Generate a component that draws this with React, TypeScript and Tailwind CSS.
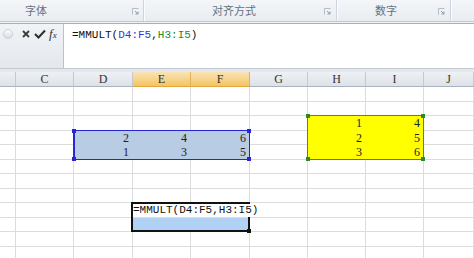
import React from 'react'

const HEADERS = ['', 'C', 'D', 'E', 'F', 'G', 'H', 'I', 'J']
const ROW_COUNT = 12

// values keyed by "col,row" (col = header index, row = 1-based sheet row)
const VALUES: Record<string, string> = {
  '2,4': '2', '3,4': '4', '4,4': '6',
  '2,5': '1', '3,5': '3', '4,5': '5',
  '6,3': '1', '7,3': '4',
  '6,4': '2', '7,4': '5',
  '6,5': '3', '7,5': '6',
}

function cellStyle(c: number, r: number) {
  if (c >= 2 && c <= 4 && r >= 4 && r <= 5) return 'bg-[#b8cce4] border-[#b8cce4]'
  if (c >= 6 && c <= 7 && r >= 3 && r <= 5) return 'bg-[#ffff00] border-[#ffff00]'
  if (c >= 3 && c <= 4 && r === 10) return 'bg-[#b0d0f4] border-[#b0d0f4]'
  return 'bg-white border-[#dadcdd]'
}

function Launcher() {
  return (
    <svg width="7" height="7" viewBox="0 0 7 7" className="mt-[1px] ml-auto">
      <path d="M0.5 6.5V0.5H6.5" fill="none" stroke="#b4bcc6" strokeWidth="1" />
      <path d="M3 3L6 6M6 3.5V6H3.5" fill="none" stroke="#8f99a6" strokeWidth="1" />
    </svg>
  )
}

const groupCls =
  'shrink-0 flex items-center border-r border-[#cdd4dd] shadow-[1px_0_0_#fbfcfd]'
const labelCls =
  "text-[11px] leading-none text-[#67717f] font-['Noto_Sans_CJK_SC',sans-serif]"

function Ribbon() {
  return (
    <div className="flex flex-col">
      <div className="h-[21px] flex bg-gradient-to-b from-[#f4f6f9] to-[#e8ecf1]">
        <div className={`w-[144px] pr-[4px] ${groupCls}`}>
          <span className={`ml-[25px] ${labelCls}`}>字体</span>
          <Launcher />
        </div>
        <div className={`w-[193px] pr-[5px] ${groupCls}`}>
          <span className={`ml-[68px] ${labelCls}`}>对齐方式</span>
          <Launcher />
        </div>
        <div className={`w-[114px] pr-[5px] ${groupCls}`}>
          <span className={`ml-[38px] ${labelCls}`}>数字</span>
          <Launcher />
        </div>
        <div className="flex-1" />
      </div>
      <div className="h-px bg-[#c3cad3]" />
      <div className="h-px bg-[#eef1f4]" />
      <div className="h-px bg-[#a7b0bb]" />
    </div>
  )
}

function FormulaBar() {
  return (
    <div className="h-[45px] flex border-b border-[#c3cad4]">
      <div className="w-[64px] shrink-0 flex items-start pl-[3px] pt-[5px] bg-gradient-to-b from-[#f1f3f6] to-[#e4e8ed] border-r border-[#b9c1cb]">
        <div className="w-[10px] h-[10px] rounded-full bg-gradient-to-b from-[#fbfcfd] to-[#d9dee5] border border-[#c9cfd7]" />
        <svg width="10" height="10" viewBox="0 0 10 10" className="ml-[8px]">
          <path d="M2 2L8 8M8 2L2 8" stroke="#3a3a3a" strokeWidth="1.8" />
        </svg>
        <svg width="12" height="10" viewBox="0 0 12 10" className="ml-[3px]">
          <path d="M1 5L4.5 8.5L11 1.5" fill="none" stroke="#2e2e2e" strokeWidth="2" />
        </svg>
        <span className="ml-[3px] -mt-[2px] text-[13px] leading-[14px] italic font-['Liberation_Serif',serif] text-[#333]">
          f<span className="text-[9px]">x</span>
        </span>
      </div>
      <div className="flex-1 bg-white pl-[8px] pt-[3px] text-[11px] leading-[16px] font-['Liberation_Mono',monospace] text-[#111] whitespace-nowrap">
        =MMULT(<span className="text-[#3838d8]">D4:F5</span>,<span className="text-[#2a8a2a]">H3:I5</span>)
      </div>
    </div>
  )
}

function Sheet() {
  const rows = Array.from({ length: ROW_COUNT }, (_, i) => i + 1)
  return (
    <div className="grid grid-cols-[16px_58px_59px_58px_59px_58px_58px_58px_1fr] grid-rows-[15px_15px_14px_15px_14px_15px_14px_15px_14px_15px_14px_15px_15px] font-['Liberation_Serif',serif] text-[12px] text-[#222]">
      {HEADERS.map((h, c) => {
        const active = c === 3 || c === 4
        return (
          <div
            key={`h${c}`}
            className={`flex items-center justify-center border-r border-b ${
              active
                ? 'bg-gradient-to-b from-[#fae3b4] to-[#f2c560] border-r-[#e2b25a] border-b-[#e7a43c]'
                : 'bg-gradient-to-b from-[#eef1f4] to-[#dde2e8] border-r-[#c3c9d1] border-b-[#a9b3bf]'
            }`}
          >
            <span className="leading-none text-[12px] text-[#333]">{h}</span>
          </div>
        )
      })}
      {rows.map((r) =>
        HEADERS.map((_, c) => (
          <div
            key={`${c}-${r}`}
            className={`flex items-center justify-end pr-[3px] border-r border-b leading-none ${
              c === 0 ? 'bg-white border-[#dadcdd]' : cellStyle(c, r)
            }`}
            style={{ gridColumn: c + 1, gridRow: r + 1 }}
          >
            {VALUES[`${c},${r}`]}
          </div>
        ))
      )}

      {/* D4:F5 selection */}
      <div className="col-start-3 col-end-6 row-start-5 row-end-7 -mt-px -ml-px relative border border-l-2 border-[#2626d6] pointer-events-none">
        <span className="absolute -left-[3px] -top-[2px] w-[4px] h-[4px] bg-[#2626d6]" />
        <span className="absolute -right-[2px] -top-[2px] w-[4px] h-[4px] bg-[#2626d6]" />
        <span className="absolute -left-[3px] -bottom-[2px] w-[4px] h-[4px] bg-[#2626d6]" />
        <span className="absolute -right-[2px] -bottom-[2px] w-[4px] h-[4px] bg-[#2626d6]" />
      </div>

      {/* H3:I5 selection */}
      <div className="col-start-7 col-end-9 row-start-4 row-end-7 -mt-px -ml-px relative border border-[#2f9a2f] pointer-events-none">
        <span className="absolute -left-[2px] -top-[2px] w-[4px] h-[4px] bg-[#2b8a2b]" />
        <span className="absolute -right-[2px] -top-[2px] w-[4px] h-[4px] bg-[#2b8a2b]" />
        <span className="absolute -left-[2px] -bottom-[2px] w-[4px] h-[4px] bg-[#2b8a2b]" />
        <span className="absolute -right-[2px] -bottom-[2px] w-[4px] h-[4px] bg-[#2b8a2b]" />
      </div>

      {/* E9:F10 array formula being edited */}
      <div className="col-start-4 col-end-6 row-start-10 row-end-12 -mt-px -ml-[2px] relative border-2 border-[#111]">
        <span className="absolute left-0 top-0 text-[11px] leading-[13px] font-['Liberation_Mono',monospace] text-[#111] whitespace-nowrap bg-white">
          =MMULT(D4:F5,H3:I5)
        </span>
        <span className="absolute -right-[3px] -bottom-[3px] w-[4px] h-[4px] bg-[#111]" />
      </div>
    </div>
  )
}

export default function App() {
  return (
    <div className="w-[474px] h-[258px] overflow-hidden bg-white">
      <Ribbon />
      <FormulaBar />
      <div className="h-[3px] bg-[#e4e8ed]" />
      <Sheet />
    </div>
  )
}
